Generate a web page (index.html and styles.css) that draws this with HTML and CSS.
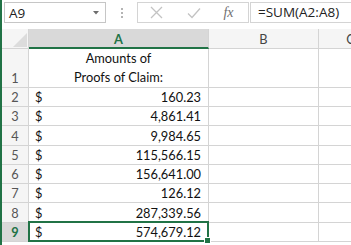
FILE: index.html
```html
<!DOCTYPE html>
<html lang="en">
<head>
    <meta charset="UTF-8">
    <meta name="viewport" content="width=device-width, initial-scale=1.0">
    <title>Proofs of Claim</title>
    <link rel="stylesheet" href="styles.css">
</head>
<body>
    <div class="window">
        <!-- Formula bar -->
        <div class="bar">
            <div class="namebox">
                <span>A9</span>
                <svg class="caret" width="6" height="4" viewBox="0 0 6 4"><polygon points="0,0 6,0 3,3.5" fill="#6d6d6d"/></svg>
            </div>
            <div class="grip"><i></i><i></i><i></i></div>
            <div class="actions">
                <span class="slot">
                    <svg width="13" height="13" viewBox="0 0 13 13"><path d="M1 1 L12 12 M12 1 L1 12" stroke="#c3c3c3" stroke-width="1.3" fill="none"/></svg>
                </span>
                <span class="slot">
                    <svg width="14" height="12" viewBox="0 0 14 12"><path d="M1 6.5 L5 10.5 L13 1.5" stroke="#c3c3c3" stroke-width="1.3" fill="none"/></svg>
                </span>
                <span class="slot fx">fx</span>
            </div>
            <div class="formula">=SUM(A2:A8)</div>
        </div>

        <!-- Sheet -->
        <div class="sheet">
            <div class="hd corner">
                <svg width="14" height="14" viewBox="0 0 14 14"><polygon points="14,0 14,14 0,14" fill="#dcdcdc"/></svg>
            </div>
            <div class="hd col on">A</div>
            <div class="hd col">B</div>
            <div class="hd col">C</div>

            <div class="hd row">1</div>
            <div class="cell title"><span>Amounts of<br>Proofs of Claim:</span></div>
            <div class="cell"></div>
            <div class="cell"></div>

            <div class="hd row">2</div>
            <div class="cell money"><span>$</span><span>160.23</span></div>
            <div class="cell"></div>
            <div class="cell"></div>

            <div class="hd row">3</div>
            <div class="cell money"><span>$</span><span>4,861.41</span></div>
            <div class="cell"></div>
            <div class="cell"></div>

            <div class="hd row">4</div>
            <div class="cell money"><span>$</span><span>9,984.65</span></div>
            <div class="cell"></div>
            <div class="cell"></div>

            <div class="hd row">5</div>
            <div class="cell money"><span>$</span><span>115,566.15</span></div>
            <div class="cell"></div>
            <div class="cell"></div>

            <div class="hd row">6</div>
            <div class="cell money"><span>$</span><span>156,641.00</span></div>
            <div class="cell"></div>
            <div class="cell"></div>

            <div class="hd row">7</div>
            <div class="cell money"><span>$</span><span>126.12</span></div>
            <div class="cell"></div>
            <div class="cell"></div>

            <div class="hd row">8</div>
            <div class="cell money"><span>$</span><span>287,339.56</span></div>
            <div class="cell"></div>
            <div class="cell"></div>

            <div class="hd row on">9</div>
            <div class="cell money active">
                <span>$</span><span>574,679.12</span>
                <div class="sel"><b class="handle"></b></div>
            </div>
            <div class="cell"></div>
            <div class="cell"></div>
        </div>
    </div>
</body>
</html>
```

FILE: styles.css
```css
/* Excel-like sheet */
body {
    margin: 0;
    width: 351px;
    height: 245px;
    overflow: hidden;
    background: #ffffff;
    font-family: Lato, "Open Sans", sans-serif;
}
.window {
    border-left: 2px solid #217346;
    height: 245px;
}

/* formula bar */
.bar {
    display: flex;
    align-items: flex-start;
    height: 29px;
    padding-top: 2px;
    box-sizing: border-box;
    font-family: "Open Sans", sans-serif;
    font-size: 13.5px;
    color: #222;
}
.namebox {
    margin-left: 2px;
    width: 102px;
    height: 21px;
    box-sizing: border-box;
    border: 1px solid #c6c6c6;
    display: flex;
    align-items: center;
    justify-content: space-between;
    padding: 0 6px 0 4px;
}
.caret {
    margin-top: 1px;
}
.grip {
    width: 31px;
    height: 21px;
    display: flex;
    flex-direction: column;
    align-items: center;
    justify-content: center;
    gap: 2px;
}
.grip i {
    width: 2px;
    height: 2px;
    background: #b4b4b4;
}
.actions {
    width: 112px;
    height: 21px;
    box-sizing: border-box;
    border: 1px solid #d4d4d4;
    display: flex;
    align-items: center;
}
.slot {
    width: 37px;
    display: flex;
    justify-content: center;
    align-items: center;
}
.slot.fx {
    width: 33px;
    font-family: "Liberation Serif", serif;
    font-style: italic;
    font-size: 14px;
    color: #707070;
}
.formula {
    flex: 1;
    margin-left: 1px;
    height: 21px;
    box-sizing: border-box;
    border: 1px solid #d4d4d4;
    border-right: none;
    padding-left: 7px;
    line-height: 19px;
}

/* grid */
.sheet {
    display: grid;
    grid-template-columns: 27px 180px 110px 64px;
    grid-template-rows: 20px 38.75px repeat(8, 19.25px);
}
.hd {
    background: #f5f5f5;
    color: #444;
    font-size: 12.8px;
    box-sizing: border-box;
    display: flex;
    align-items: center;
    justify-content: center;
}
.hd.col {
    border-right: 1px solid #d4d4d4;
    border-bottom: 1px solid #d4d4d4;
    padding-top: 1px;
}
.hd.col.on {
    background: #d9d9d9;
    color: #217346;
    font-weight: bold;
    border-bottom: 2px solid #217346;
}
.hd.row {
    border-right: 1px solid #d4d4d4;
    border-bottom: 1px solid #d4d4d4;
    align-items: flex-end;
    padding-bottom: 1px;
    color: #555;
}
.hd.row.on {
    background: #d9d9d9;
    color: #217346;
    font-weight: bold;
}
.corner {
    border-right: 1px solid #d4d4d4;
    border-bottom: 1px solid #d4d4d4;
    justify-content: flex-end;
    align-items: flex-end;
    padding: 0 1px 1px 0;
}
.cell {
    box-sizing: border-box;
    border-right: 1px solid #d4d4d4;
    border-bottom: 1px solid #d4d4d4;
    font-size: 12.8px;
    color: #111;
    display: flex;
    align-items: flex-end;
    line-height: 19px;
}
.cell span {
    margin-bottom: -1px;
}
.title {
    justify-content: center;
    text-align: center;
    line-height: 19.5px;
}
.money {
    justify-content: space-between;
    padding: 0 7px 0 6px;
}
.active {
    position: relative;
}
.sel {
    position: absolute;
    top: -2px;
    left: -1px;
    right: -1px;
    bottom: -1px;
    border: 2px solid #217346;
}
.handle {
    position: absolute;
    right: -4px;
    bottom: -4px;
    width: 5px;
    height: 5px;
    background: #217346;
    border: 1px solid #fff;
}
```
